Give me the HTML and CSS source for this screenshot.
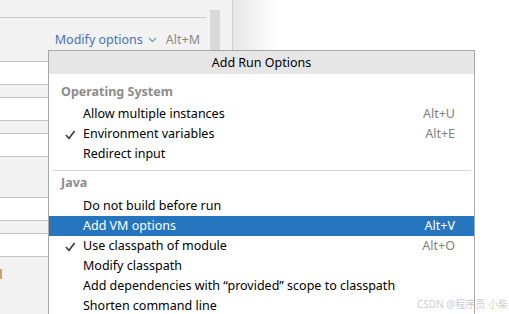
FILE: index.html
```html
<!DOCTYPE html>
<html>
<head>
	<title>Add Run Options</title>
	<link rel="stylesheet" href="styles.css">
</head>
<body>

<div class="screen">
  <div class="dialog">
    <div class="top-line"></div>
    <div class="scrollbar"></div>
    <div class="modify">
      <span class="modify-link">Modify options</span>
      <svg class="chevron" width="9" height="6" viewBox="0 0 9 6"><path d="M1 1 L4.5 4.5 L8 1" fill="none" stroke="#7f8fa6" stroke-width="1.2"/></svg>
      <span class="modify-key">Alt+M</span>
    </div>
    <div class="fields">
      <div class="field"></div>
      <div class="field"></div>
      <div class="field"></div>
      <div class="field wide-gap"></div>
      <div class="field"></div>
    </div>
    <span class="stub"></span>
  </div>
  <div class="shade"></div>
</div>

<div class="popup">
  <div class="popup-title">Add Run Options</div>
  <div class="popup-body">
    <div class="group">Operating System</div>
    <div class="item"><span class="label">Allow multiple instances</span><span class="key">Alt+U</span></div>
    <div class="item"><svg class="check" width="10" height="10" viewBox="0 0 10 10"><path d="M1 5 L4 8.5 L9.5 1" fill="none" stroke="#3a3a3a" stroke-width="1.6"/></svg><span class="label">Environment variables</span><span class="key">Alt+E</span></div>
    <div class="item"><span class="label">Redirect input</span></div>
    <div class="separator"></div>
    <div class="group">Java</div>
    <div class="item"><span class="label">Do not build before run</span></div>
    <div class="item selected"><span class="label">Add VM options</span><span class="key">Alt+V</span></div>
    <div class="item"><svg class="check" width="10" height="10" viewBox="0 0 10 10"><path d="M1 5 L4 8.5 L9.5 1" fill="none" stroke="#3a3a3a" stroke-width="1.6"/></svg><span class="label">Use classpath of module</span><span class="key">Alt+O</span></div>
    <div class="item"><span class="label">Modify classpath</span></div>
    <div class="item"><span class="label">Add dependencies with “provided” scope to classpath</span></div>
    <div class="item"><span class="label">Shorten command line</span></div>
  </div>
</div>

<div class="watermark">CSDN @程序员 小柴</div>

</body>
</html>
```

FILE: styles.css
```css
body {
    margin: 0;
    width: 509px;
    height: 314px;
    overflow: hidden;
    position: relative;
    background: #ffffff;
    font-family: "Noto Sans", "Noto Sans CJK SC", sans-serif;
    font-size: 12.5px;
    color: #1a1a1a;
}

.screen {
    display: flex;
    height: 314px;
}

.dialog {
    position: relative;
    width: 232px;
    background: #f2f2f2;
    border-right: 1px solid #cfcfcf;
}

.shade {
    width: 44px;
    background: linear-gradient(to right, #e6e6e6, #ffffff);
}

.top-line {
    width: 206px;
    height: 17px;
    border-bottom: 1px solid #cacaca;
}

.scrollbar {
    position: absolute;
    left: 210px;
    top: 10px;
    width: 10px;
    height: 60px;
    background: #d9d9d9;
}

.modify {
    display: flex;
    align-items: center;
    justify-content: flex-end;
    height: 20px;
    margin-top: 11px;
    padding-right: 32px;
    font-size: 12.5px;
}

.modify-link {
    color: #4673b5;
}

.chevron {
    margin: 1px 9px 0 5px;
}

.modify-key {
    color: #8a8a8a;
}

.fields {
    margin-top: 12px;
}

.field {
    width: 200px;
    height: 22px;
    background: #ffffff;
    border-top: 1px solid #c4c4c4;
    border-bottom: 1px solid #c4c4c4;
    margin-bottom: 12px;
}

.wide-gap {
    margin-top: 40px;
}

.stub {
    display: block;
    width: 2px;
    height: 10px;
    margin-top: 11px;
    background: #c9a27a;
}

.popup {
    position: absolute;
    left: 48px;
    top: 50px;
    width: 425px;
    height: 300px;
    background: #ffffff;
    border: 1px solid #a8a8a8;
}

.popup-title {
    height: 23px;
    line-height: 23px;
    background: #e6e6e6;
    text-align: center;
    color: #000000;
}

.popup-body {
    padding-top: 8px;
}

.group {
    height: 20px;
    line-height: 20px;
    padding-left: 12px;
    margin-bottom: 2px;
    font-weight: bold;
    color: #8c8c8c;
}

.separator {
    height: 1px;
    margin: 6px 3px 2px;
    background: #d9d9d9;
}

.separator + .group {
    margin-bottom: 3px;
}

.item {
    position: relative;
    display: flex;
    height: 20px;
    line-height: 20px;
    padding: 0 19px 0 34px;
    color: #000000;
}

.label {
    flex: 1;
}

.key {
    color: #808080;
}

.selected {
    background: #2675bf;
    color: #ffffff;
}

.selected .key {
    color: #ffffff;
}

.check {
    position: absolute;
    left: 16px;
    top: 6px;
}

.watermark {
    position: absolute;
    left: 417px;
    top: 296px;
    font-size: 10px;
    color: rgba(170, 170, 170, 0.6);
    white-space: nowrap;
}
```
